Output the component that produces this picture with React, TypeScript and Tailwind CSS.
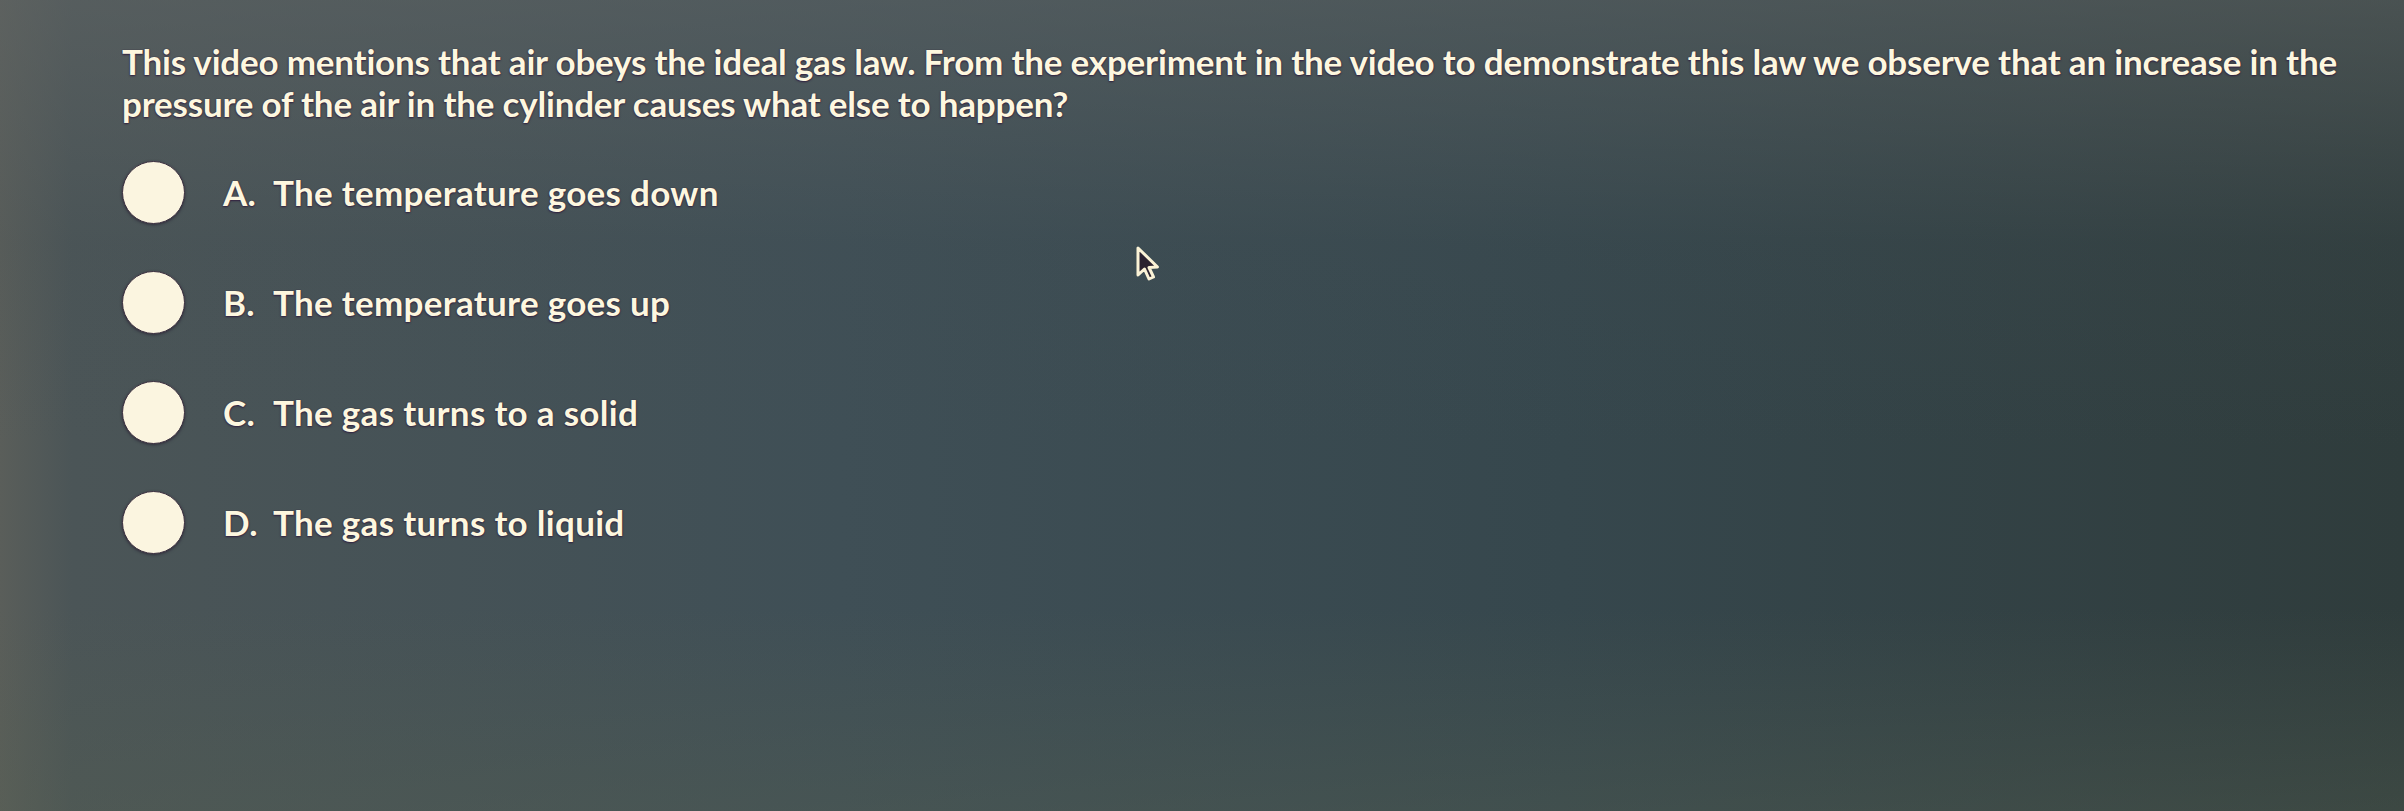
import React from "react";

const options = [
    { key: "A.", label: "The temperature goes down" },
    { key: "B.", label: "The temperature goes up" },
    { key: "C.", label: "The gas turns to a solid" },
    { key: "D.", label: "The gas turns to liquid" },
];

const Cursor = () => (
    <svg
        className="absolute left-[1133px] top-[245px]"
        width="30"
        height="40"
        viewBox="0 0 30 40"
        fill="none"
    >
        <path
            d="M5 3 L5 30 L11.5 24 L16 34 L20.5 32 L16 22.5 L24.5 22 Z"
            fill="#2b2230"
            stroke="#fbf3d6"
            strokeWidth="3"
            strokeLinejoin="round"
        />
    </svg>
);

const App = () => {
    return (
        <div className="relative w-full h-[811px] overflow-hidden bg-[#3c4a50] bg-[linear-gradient(to_bottom,rgba(95,100,100,0.55)_0%,rgba(70,80,85,0.15)_30%,rgba(0,0,0,0)_55%,rgba(0,0,0,0)_75%,rgba(85,95,80,0.35)_100%),linear-gradient(to_right,#5a5e5a_0%,#4b5557_3%,#3f4f56_35%,#36474d_65%,#2f3c3c_100%)] font-['Lato','Open_Sans',sans-serif] text-[#fdf7df] [text-shadow:0_1px_2px_rgba(45,25,60,0.9),0_0_1px_rgba(45,25,60,0.9)]">
            <div className="pl-[122px] pr-[40px] pt-[40px]">
                <p className="text-[35px] leading-[42px] font-bold tracking-[-0.2px]">
                    This video mentions that air obeys the ideal gas law. From the experiment in the video to demonstrate this law we observe that an increase in the pressure of the air in the cylinder causes what else to happen?
                </p>
                <div className="mt-[13px] flex flex-col">
                    {options.map((o) => (
                        <div key={o.key} className="h-[110px] flex items-center">
                            <span className="w-[63px] h-[63px] rounded-full bg-[#fbf5e0] border-[1.5px] border-[#3b2f3f] shadow-[0_1px_3px_rgba(30,20,40,0.6)] shrink-0" />
                            <span className="ml-[38px] text-[35px] leading-[42px] font-bold tracking-[0.3px]">
                                <span className="inline-block w-[50px]">{o.key}</span>
                                {o.label}
                            </span>
                        </div>
                    ))}
                </div>
            </div>
            <Cursor />
        </div>
    );
};

export default App;
